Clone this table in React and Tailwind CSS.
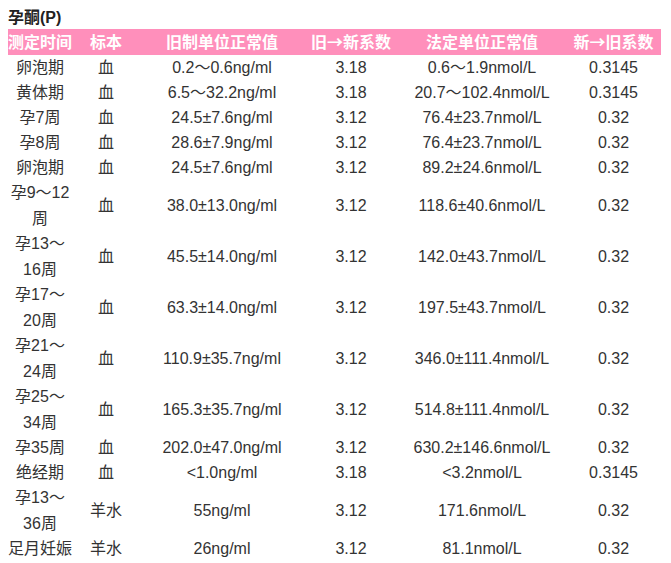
const rows = [
  ['卵泡期', '血', '0.2～0.6ng/ml', '3.18', '0.6～1.9nmol/L', '0.3145'],
  ['黄体期', '血', '6.5～32.2ng/ml', '3.18', '20.7～102.4nmol/L', '0.3145'],
  ['孕7周', '血', '24.5±7.6ng/ml', '3.12', '76.4±23.7nmol/L', '0.32'],
  ['孕8周', '血', '28.6±7.9ng/ml', '3.12', '76.4±23.7nmol/L', '0.32'],
  ['卵泡期', '血', '24.5±7.6ng/ml', '3.12', '89.2±24.6nmol/L', '0.32'],
  ['孕9～12周', '血', '38.0±13.0ng/ml', '3.12', '118.6±40.6nmol/L', '0.32'],
  ['孕13～16周', '血', '45.5±14.0ng/ml', '3.12', '142.0±43.7nmol/L', '0.32'],
  ['孕17～20周', '血', '63.3±14.0ng/ml', '3.12', '197.5±43.7nmol/L', '0.32'],
  ['孕21～24周', '血', '110.9±35.7ng/ml', '3.12', '346.0±111.4nmol/L', '0.32'],
  ['孕25～34周', '血', '165.3±35.7ng/ml', '3.12', '514.8±111.4nmol/L', '0.32'],
  ['孕35周', '血', '202.0±47.0ng/ml', '3.12', '630.2±146.6nmol/L', '0.32'],
  ['绝经期', '血', '<1.0ng/ml', '3.18', '<3.2nmol/L', '0.3145'],
  ['孕13～36周', '羊水', '55ng/ml', '3.12', '171.6nmol/L', '0.32'],
  ['足月妊娠', '羊水', '26ng/ml', '3.12', '81.1nmol/L', '0.32'],
];

const cjk = { fontFamily: "'Noto Sans CJK SC', sans-serif" };

const heads = [
  '测定时间',
  '标本',
  '旧制单位正常值',
  <>旧<span style={cjk}>→</span>新系数</>,
  '法定单位正常值',
  <>新<span style={cjk}>→</span>旧系数</>,
];

export default function App() {
  return (
    <div
      className="bg-white text-[#333] text-[16px] leading-[25px] pt-[6px] px-[8px]"
      style={{ fontFamily: "'Liberation Sans', 'Noto Sans CJK SC', sans-serif" }}
    >
      <div className="font-bold text-[#222] leading-[23px]">孕酮(P)</div>
      <table className="table-fixed border-collapse w-[653px]">
        <colgroup>
          <col className="w-[64px]" />
          <col className="w-[68px]" />
          <col className="w-[164px]" />
          <col className="w-[94px]" />
          <col className="w-[168px]" />
          <col className="w-[95px]" />
        </colgroup>
        <thead>
          <tr className="bg-[#ff8fbb] text-white font-bold">
            {heads.map((h, i) => (
              <th key={i} className="p-0 text-center font-bold whitespace-nowrap">
                {h}
              </th>
            ))}
          </tr>
        </thead>
        <tbody>
          {rows.map((r, i) => {
            const wrapped = r[0].includes('～');
            return (
              <tr key={i}>
                {r.map((c, j) => (
                  <td
                    key={j}
                    className={
                      wrapped
                        ? 'p-0 text-center align-middle leading-[25.5px]'
                        : 'p-0 text-center align-middle'
                    }
                  >
                    {c}
                  </td>
                ))}
              </tr>
            );
          })}
        </tbody>
      </table>
    </div>
  );
}
